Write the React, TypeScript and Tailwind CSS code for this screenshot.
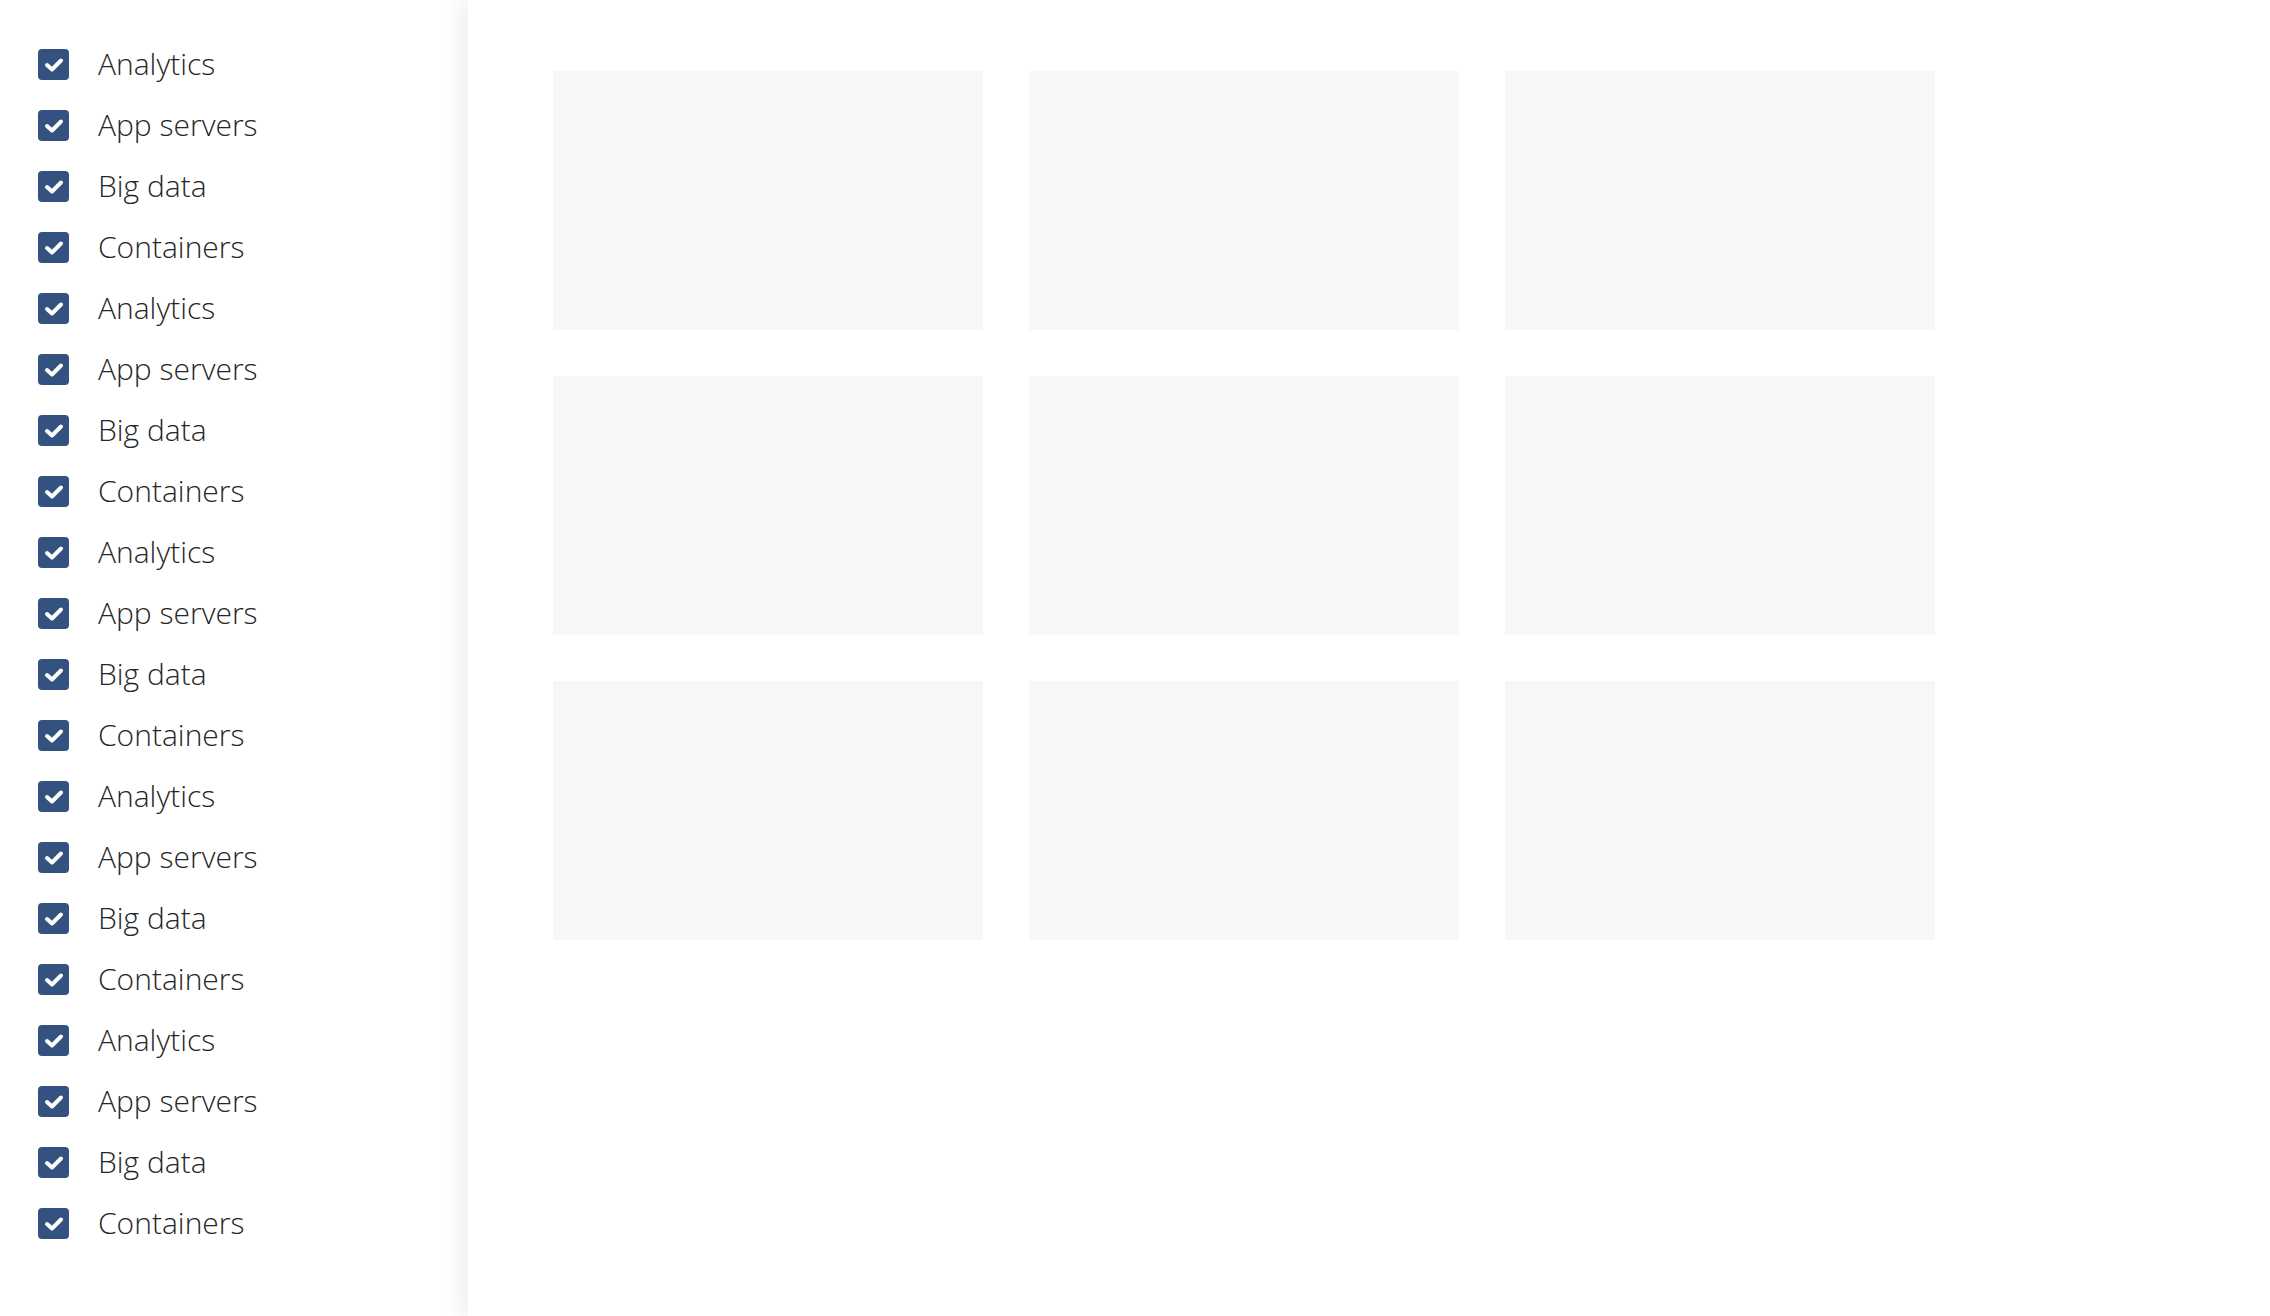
const labels = ["Analytics", "App servers", "Big data", "Containers"];

const items = Array.from({ length: 20 }, (_, i) => labels[i % 4]);

function CheckBox() {
  return (
    <span className="flex h-[31px] w-[31px] shrink-0 items-center justify-center rounded-[4px] bg-[#33527f]">
      <svg viewBox="0 0 24 24" className="h-[24px] w-[24px]" fill="none" stroke="white" strokeWidth={4} strokeLinecap="round" strokeLinejoin="round">
        <polyline points="5 12 10 16.5 19 7.5" />
      </svg>
    </span>
  );
}

export default function App() {
  return (
    <div className="flex h-[1316px] w-full overflow-hidden bg-white font-['Open_Sans',sans-serif]">
      <aside className="w-[468px] shrink-0 bg-white pt-[34px] pl-[38px]">
        <ul>
          {items.map((label, i) => (
            <li key={i} className="flex h-[61px] items-center gap-[29px]">
              <CheckBox />
              <span className="-mt-[2px] text-[30px] font-light leading-none text-[#262626]">{label}</span>
            </li>
          ))}
        </ul>
      </aside>
      <main className="relative z-10 flex-1 bg-white pt-[71px] pl-[85px] shadow-[-8px_0_22px_rgba(0,0,0,0.07)]">
        <div className="grid grid-cols-[repeat(3,430px)] gap-[46px]">
          {Array.from({ length: 9 }).map((_, i) => (
            <div key={i} className="h-[259px] bg-[#f7f7f7]" />
          ))}
        </div>
      </main>
    </div>
  );
}
